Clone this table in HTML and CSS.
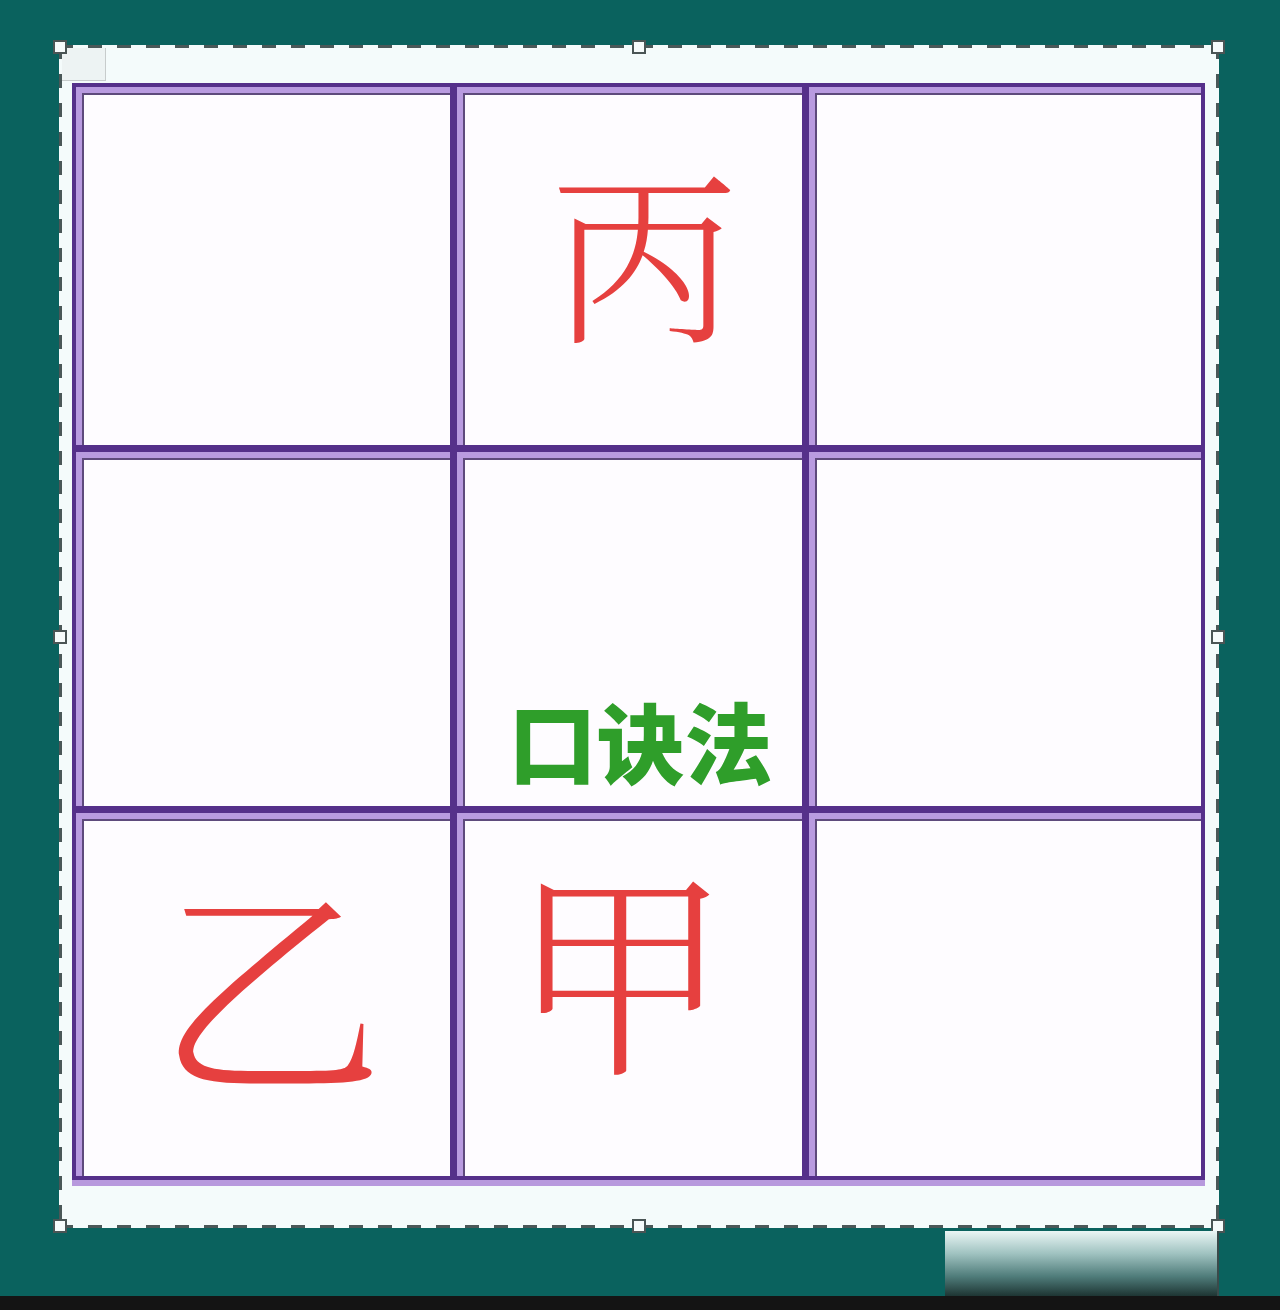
FILE: index.html
```html
<!DOCTYPE html>
<html lang="zh">
<head>
<meta charset="utf-8">
<title>口诀法</title>
<link rel="stylesheet" href="styles.css">
</head>
<body>
<div class="page">
  <div class="selection">
    <span class="tab"></span>
    <span class="handle h-tl"></span>
    <span class="handle h-tc"></span>
    <span class="handle h-tr"></span>
    <span class="handle h-ml"></span>
    <span class="handle h-mr"></span>
    <span class="handle h-bl"></span>
    <span class="handle h-bc"></span>
    <span class="handle h-br"></span>
    <div class="grid">
      <div class="cell"></div>
      <div class="cell c-bing"><span class="han">丙</span></div>
      <div class="cell"></div>
      <div class="cell"></div>
      <div class="cell c-label"><span class="label">口诀法</span></div>
      <div class="cell"></div>
      <div class="cell c-yi"><span class="han">乙</span></div>
      <div class="cell c-jia"><span class="han">甲</span></div>
      <div class="cell"></div>
    </div>
  </div>
  <div class="glare"></div>
</div>
<div class="footer"></div>
</body>
</html>
```

FILE: styles.css
```css
html, body {
  margin: 0;
  padding: 0;
}
body {
  width: 1280px;
  height: 1310px;
  background: #0a625e;
  overflow: hidden;
  font-family: "Noto Sans CJK SC", sans-serif;
}
.page {
  position: relative;
  height: 1296px;
  box-sizing: border-box;
  padding: 45px 0 0 59px;
}
.footer {
  height: 14px;
  background: #141414;
}
.selection {
  position: relative;
  width: 1160px;
  height: 1183px;
  box-sizing: border-box;
  padding: 38px 0 0 13px;
  background-color: #f4fbfb;
  background-image:
    repeating-linear-gradient(90deg, #4a5858 0 14px, transparent 14px 29px),
    repeating-linear-gradient(90deg, #4a5858 0 14px, transparent 14px 29px),
    repeating-linear-gradient(180deg, #4a5858 0 14px, transparent 14px 29px),
    repeating-linear-gradient(180deg, #4a5858 0 14px, transparent 14px 29px);
  background-size: 100% 3px, 100% 3px, 3px 100%, 3px 100%;
  background-position: 0 0, 0 100%, 0 0, 100% 0;
  background-repeat: no-repeat;
}
.tab {
  position: absolute;
  left: 3px;
  top: 3px;
  width: 43px;
  height: 32px;
  border-right: 1px solid #c7cccc;
  border-bottom: 1px solid #c7cccc;
  background: #edf3f3;
}
.handle {
  position: absolute;
  width: 10px;
  height: 10px;
  border: 2px solid #4a5555;
  background: #f6fbfb;
}
.h-tl { left: -6px; top: -5px; }
.h-tc { left: calc(50% - 7px); top: -5px; }
.h-tr { right: -6px; top: -5px; }
.h-ml { left: -6px; top: calc(50% - 7px); }
.h-mr { right: -6px; top: calc(50% - 7px); }
.h-bl { left: -6px; bottom: -5px; }
.h-bc { left: calc(50% - 7px); bottom: -5px; }
.h-br { right: -6px; bottom: -5px; }

.grid {
  width: 1133px;
  box-sizing: border-box;
  display: grid;
  grid-template-columns: 374px 345px 392px;
  grid-template-rows: 358px 354px 363px;
  gap: 7px;
  padding: 4px;
  background: #55308a;
  border-bottom: 6px solid #b799dd;
}
.cell {
  display: flex;
  justify-content: center;
  align-items: center;
  background: #fefcff;
  border-left: 6px solid #b99be0;
  border-top: 6px solid #b99be0;
  box-shadow: inset 2px 2px 0 #5e4a7c;
}
.han {
  font-family: "Noto Serif CJK SC", "Noto Sans CJK SC", serif;
  font-weight: 300;
  color: #e6403f;
  line-height: 1;
}
.c-bing { padding: 0 0 44px 24px; }
.c-bing .han { font-size: 188px; }
.c-yi { padding: 0 0 36px 10px; }
.c-yi .han { font-size: 226px; }
.c-jia { padding: 0 24px 70px 0; }
.c-jia .han { font-size: 220px; }
.c-label {
  align-items: flex-end;
  padding: 0 0 23px 16px;
}
.label {
  font-family: "Noto Sans CJK SC", sans-serif;
  font-weight: 900;
  font-size: 88px;
  line-height: 1;
  color: #2f9e2a;
}
.glare {
  position: absolute;
  left: 945px;
  top: 1231px;
  width: 272px;
  height: 65px;
  background: linear-gradient(180deg, #eaf6f5 0%, #9fc2c0 35%, #4f7c7a 70%, #1e3533 100%);
  border-right: 2px solid #3b4a4a;
}
```
